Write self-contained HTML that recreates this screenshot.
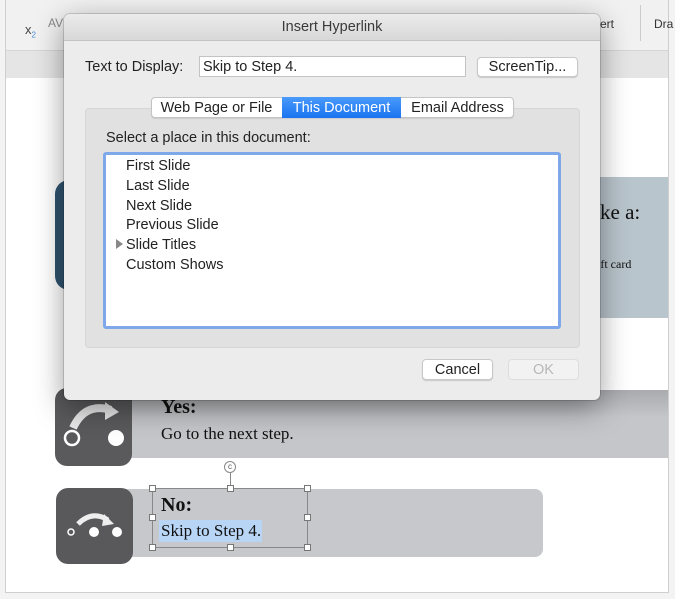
<!DOCTYPE html>
<html><head><style>
*{margin:0;padding:0;box-sizing:border-box}
body{width:675px;height:599px;background:#f3f3f3;position:relative;overflow:hidden;font-family:"Liberation Sans",sans-serif}
.a{position:absolute}
.sans{font-family:"Liberation Sans",sans-serif;font-size:14.5px;color:#222}
.serif{font-family:"Liberation Serif",serif;color:#111}
.btn{background:#fff;border:1px solid #c8c8c8;border-radius:4px;text-align:center;box-shadow:0 1px 1px rgba(0,0,0,.15)}
.h{position:absolute;width:7px;height:7px;background:#fff;border:1px solid #777}
</style></head><body>
<div class="a" style="left:5px;top:0;width:664px;height:593px;background:#fff;border:1px solid #cfcfcf"></div>
<div class="a" style="left:6px;top:0;width:662px;height:50px;background:#f1f1f1"></div>
<div class="a" style="left:6px;top:50px;width:662px;height:28px;background:#e5e5e5;border-top:1px solid #d5d5d5"></div>
<div class="a sans" style="left:25px;top:22px;font-size:13px;color:#444">x<sub style="font-size:8px;color:#4a8ad0">2</sub></div>
<div class="a sans" style="left:48px;top:16px;font-size:12px;color:#888">AV</div>
<div class="a sans" style="left:594px;top:17px;font-size:12px;color:#333">sert</div>
<div class="a" style="left:640px;top:5px;width:1px;height:36px;background:#ccc"></div>
<div class="a sans" style="left:654px;top:17px;font-size:12px;color:#333">Dra</div>
<div class="a" style="left:55px;top:180px;width:30px;height:110px;background:#2f5470;border-radius:14px"></div>
<div class="a" style="left:590px;top:177px;width:78px;height:141px;background:#b9c5cc"></div>
<div class="a serif" style="left:600px;top:200px;font-size:21px">ke a:</div>
<div class="a serif" style="left:597px;top:257px;font-size:12px">ift card</div>
<div class="a" style="left:110px;top:390px;width:558px;height:68px;background:linear-gradient(#a9aaae,#c5c6ca 40%)"></div>
<div class="a" style="left:55px;top:388px;width:77px;height:78px;background:#5a5a5c;border-radius:12px"></div>
<svg class="a" style="left:55px;top:388px" width="77" height="78"><path d="M18 40 Q30 14 56 22" stroke="#e8e8e8" stroke-width="8" fill="none"/><path d="M50 14 L64 24 L50 32 Z" fill="#e8e8e8"/><circle cx="17" cy="50" r="7" stroke="#fff" stroke-width="2.5" fill="none"/><circle cx="61" cy="50" r="8" fill="#fff"/></svg>
<div class="a serif" style="left:161px;top:396px;font-size:20px;font-weight:bold">Yes:</div>
<div class="a serif" style="left:161px;top:424px;font-size:17px">Go to the next step.</div>
<div class="a" style="left:110px;top:489px;width:433px;height:68px;background:#c7c8cc;border-radius:8px"></div>
<div class="a" style="left:56px;top:488px;width:77px;height:76px;background:#59595b;border-radius:12px"></div>
<svg class="a" style="left:56px;top:488px" width="77" height="76"><path d="M22 36 Q36 22 52 32" stroke="#eee" stroke-width="5" fill="none"/><path d="M48 26 L58 36 L46 38 Z" fill="#eee"/><circle cx="15" cy="44" r="3" stroke="#fff" stroke-width="1.5" fill="none"/><circle cx="38" cy="44" r="5" fill="#fff"/><circle cx="61" cy="44" r="5" fill="#fff"/></svg>
<div class="a" style="left:152px;top:488px;width:156px;height:60px;border:1px solid #888"></div>
<div class="a" style="left:230px;top:470px;width:1px;height:18px;background:#888"></div>
<div class="a" style="left:224px;top:461px;width:12px;height:12px;border:1px solid #888;border-radius:50%;background:#fff;font-size:8px;text-align:center;line-height:10px;color:#555">c</div>
<div class="h" style="left:149px;top:485px"></div><div class="h" style="left:227px;top:485px"></div><div class="h" style="left:304px;top:485px"></div>
<div class="h" style="left:149px;top:514px"></div><div class="h" style="left:304px;top:514px"></div>
<div class="h" style="left:149px;top:544px"></div><div class="h" style="left:227px;top:544px"></div><div class="h" style="left:304px;top:544px"></div>
<div class="a serif" style="left:161px;top:494px;font-size:20px;font-weight:bold">No:</div>
<div class="a" style="left:159px;top:520px;width:103px;height:22px;background:#b8d5f5"></div>
<div class="a serif" style="left:161px;top:521px;font-size:17px">Skip to Step 4.</div>
<div class="a" style="left:64px;top:14px;width:536px;height:386px;background:#ececec;border-radius:6px;box-shadow:0 8px 30px rgba(0,0,0,.4),0 0 0 1px rgba(0,0,0,.15);overflow:hidden">
 <div style="height:27px;background:linear-gradient(#ebebeb,#d8d8d8);border-bottom:1px solid #c4c4c4;text-align:center;line-height:27px;font-size:14.5px;color:#3a3a3a">Insert Hyperlink</div>
</div>
<div class="a sans" style="left:85px;top:59px">Text to Display:</div>
<div class="a" style="left:199px;top:56px;width:267px;height:21px;background:#fff;border:1px solid #c3c3c3"></div>
<div class="a sans" style="left:203px;top:59px">Skip to Step 4.</div>
<div class="a btn sans" style="left:477px;top:57px;width:101px;height:20px;line-height:19px">ScreenTip...</div>
<div class="a" style="left:85px;top:108px;width:495px;height:240px;background:#e1e1e1;border-radius:4px;border:1px solid #d6d6d6"></div>
<div class="a" style="left:151px;top:97px;width:363px;height:21px;background:#fff;border:1px solid #c4c4c4;border-radius:4px;box-shadow:0 1px 1px rgba(0,0,0,.1)"></div>
<div class="a" style="left:282px;top:97px;width:119px;height:21px;background:linear-gradient(#4a9bfb,#1a73f0)"></div>
<div class="a sans" style="left:151px;top:100px;width:131px;text-align:center">Web Page or File</div>
<div class="a sans" style="left:282px;top:100px;width:119px;text-align:center;color:#fff">This Document</div>
<div class="a sans" style="left:401px;top:100px;width:113px;text-align:center">Email Address</div>
<div class="a sans" style="left:106px;top:130px">Select a place in this document:</div>
<div class="a" style="left:103px;top:152px;width:458px;height:177px;background:#fff;border:3px solid #7fa8ea;border-radius:3px"></div>
<div class="a sans" style="left:126px;top:157px;line-height:19.8px">First Slide<br>Last Slide<br>Next Slide<br>Previous Slide<br>Slide Titles<br>Custom Shows</div>
<div class="a" style="left:116px;top:239px;width:0;height:0;border-left:7px solid #888;border-top:5px solid transparent;border-bottom:5px solid transparent"></div>
<div class="a btn sans" style="left:422px;top:359px;width:71px;height:21px;line-height:20px">Cancel</div>
<div class="a btn sans" style="left:508px;top:359px;width:71px;height:21px;line-height:20px;background:#f2f2f2;color:#b8b8b8;box-shadow:none;border-color:#ddd">OK</div>
</body></html>
